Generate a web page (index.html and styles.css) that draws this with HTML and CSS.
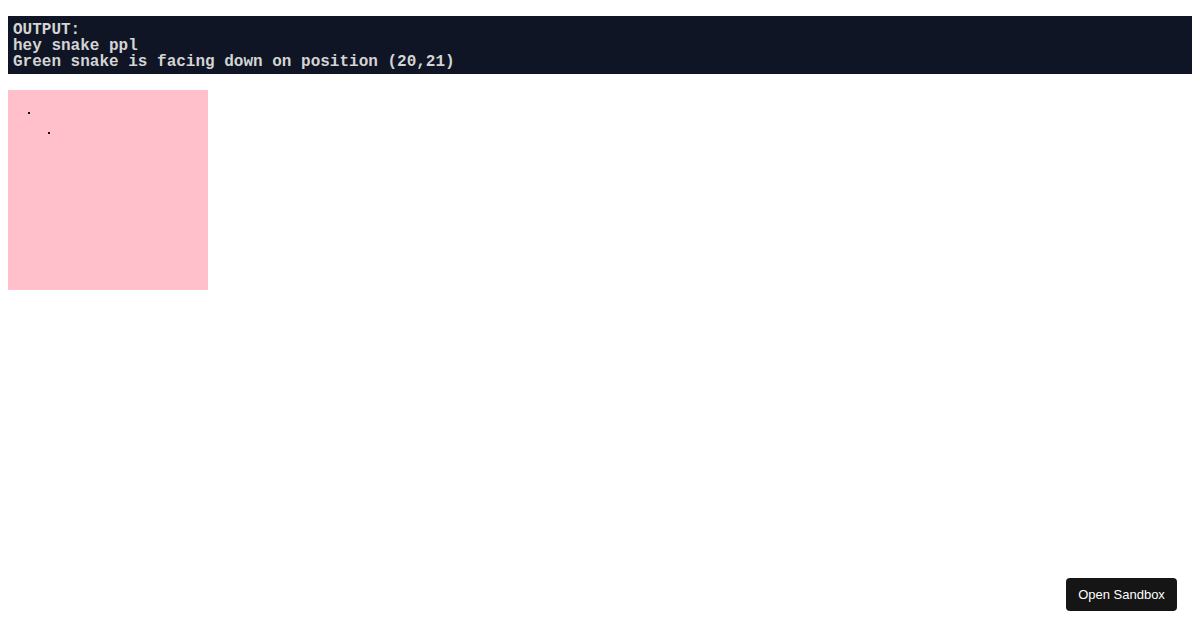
FILE: index.html
```html
<!DOCTYPE html>
<html lang="en">
<head>
    <meta charset="UTF-8">
    <meta name="viewport" content="width=device-width">
    <title>Snake</title>
    <link rel="stylesheet" href="styles.css">
</head>
<body>
<pre class="output">OUTPUT:
hey snake ppl
Green snake is facing down on position (20,21)</pre>
<div class="board">
    <span class="dot" style="left:20px;top:22px"></span>
    <span class="dot" style="left:40px;top:42px"></span>
</div>
<a class="open-sandbox" href="#">Open Sandbox</a>
</body>
</html>
```

FILE: styles.css
```css
body{
    margin: 8px;
    background: #fff;
}
.output{
    margin: 8px 0 16px;
    padding: 6px 5px 4px;
    background-color: #0f1524;
    color: #d4d4d4;
    font-family: "Courier New", "Liberation Mono", monospace;
    font-weight: bold;
    font-size: 16px;
    line-height: 16px;
}
.board{
    position: relative;
    width: 200px;
    height: 200px;
    background-color: pink;
}
.dot{
    position: absolute;
    width: 2px;
    height: 2px;
    background-color: #111;
}
.open-sandbox{
    position: fixed;
    right: 23px;
    bottom: 19px;
    width: 111px;
    height: 33px;
    box-sizing: border-box;
    display: flex;
    align-items: center;
    justify-content: center;
    background-color: #151515;
    color: #fff;
    border-radius: 4px;
    font-family: "Liberation Sans", Arial, sans-serif;
    font-size: 13px;
    text-decoration: none;
}
```
